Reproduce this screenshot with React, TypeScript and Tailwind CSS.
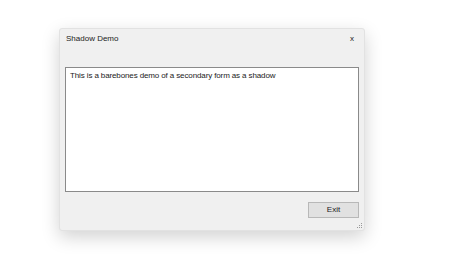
export default function App() {
  return (
    <div className="w-[474px] h-[275px] bg-white pt-[28px] pl-[59px]" style={{ fontFamily: '"Liberation Sans", Arial, sans-serif' }}>
      <div className="relative w-[306px] h-[203px] bg-[#f0f0f0] border border-[#e2e2e2] rounded-[3px] shadow-[0_6px_18px_rgba(0,0,0,0.18)] flex flex-col">
        <div className="flex items-center justify-between h-[18px] mt-[1px] pl-[6px] pr-[10px]">
          <span className="text-[8px] text-[#222]">Shadow Demo</span>
          <span className="text-[8px] text-[#222]">x</span>
        </div>
        <div className="pl-[5px] pr-[5px] pt-[19px]">
          <div className="h-[125px] bg-white border border-[#8a8a8a] px-[4px] pt-[3px] text-[8px] text-[#1b1b1b] leading-[10px] tracking-[-0.12px]">
            This is a barebones demo of a secondary form as a shadow
          </div>
        </div>
        <div className="flex justify-end pr-[5px] pt-[10px]">
          <button className="w-[51px] h-[16px] bg-[#e1e1e1] border border-[#b8b8b8] text-[8px] text-[#1b1b1b] leading-none">Exit</button>
        </div>
        <svg className="absolute right-[1px] bottom-[1px]" width="7" height="7" viewBox="0 0 7 7">
          <rect x="5" y="1" width="1" height="1" fill="#999" />
          <rect x="3" y="3" width="1" height="1" fill="#999" />
          <rect x="5" y="3" width="1" height="1" fill="#999" />
          <rect x="1" y="5" width="1" height="1" fill="#999" />
          <rect x="3" y="5" width="1" height="1" fill="#999" />
          <rect x="5" y="5" width="1" height="1" fill="#999" />
        </svg>
      </div>
    </div>
  );
}
